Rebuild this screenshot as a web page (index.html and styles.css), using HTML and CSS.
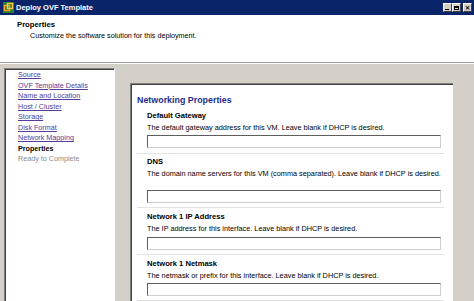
FILE: index.html
```html
<!DOCTYPE html>
<html>
<head>
<meta charset="utf-8">
<link rel="stylesheet" href="styles.css">
</head>
<body>
<div class="window">
  <div class="titlebar">
    <svg class="title-icon" width="11" height="11" viewBox="0 0 11 11">
      <rect x="0" y="0" width="11" height="11" fill="#2f7d32"/>
      <rect x="1.5" y="3.5" width="5" height="5" fill="none" stroke="#f2a51a" stroke-width="1.4"/>
      <rect x="4.5" y="1.5" width="5" height="5" fill="none" stroke="#f6c84a" stroke-width="1.4"/>
    </svg>
    <span class="title-text">Deploy OVF Template</span>
    <div class="winbtns">
      <span class="wbtn"><span class="g-min"></span></span>
      <span class="wbtn"><span class="g-max"></span></span>
      <span class="wbtn close">&#x2715;</span>
    </div>
  </div>
  <div class="header">
    <div class="header-title">Properties</div>
    <div class="header-desc">Customize the software solution for this deployment.</div>
  </div>
  <div class="main">
    <nav class="nav">
      <a class="nav-link" href="#">Source</a>
      <a class="nav-link" href="#">OVF Template Details</a>
      <a class="nav-link" href="#">Name and Location</a>
      <a class="nav-link" href="#">Host / Cluster</a>
      <a class="nav-link" href="#">Storage</a>
      <a class="nav-link" href="#">Disk Format</a>
      <a class="nav-link" href="#">Network Mapping</a>
      <span class="nav-current">Properties</span>
      <span class="nav-disabled">Ready to Complete</span>
    </nav>
    <div class="content">
      <div class="panel">
        <div class="panel-title">Networking Properties</div>
        <div class="section s-first">
          <div class="field-title">Default Gateway</div>
          <div class="field-desc">The default gateway address for this VM. Leave blank if DHCP is desired.</div>
          <input class="field-input" type="text">
        </div>
        <div class="section s-dns">
          <div class="field-title">DNS</div>
          <div class="field-desc">The domain name servers for this VM (comma separated). Leave blank if DHCP is desired.</div>
          <input class="field-input gap-lg" type="text">
        </div>
        <div class="section s-ip">
          <div class="field-title">Network 1 IP Address</div>
          <div class="field-desc">The IP address for this interface. Leave blank if DHCP is desired.</div>
          <input class="field-input gap-md" type="text">
        </div>
        <div class="section s-mask">
          <div class="field-title">Network 1 Netmask</div>
          <div class="field-desc">The netmask or prefix for this interface. Leave blank if DHCP is desired.</div>
          <input class="field-input" type="text">
        </div>
      </div>
    </div>
  </div>
</div>
</body>
</html>
```
FILE: styles.css
```css
html, body {
  margin: 0;
  padding: 0;
}
body {
  width: 474px;
  height: 301px;
  overflow: hidden;
  background: #d4d0c8;
  font-family: "Liberation Sans", Arial, sans-serif;
  color: #000;
}
.window {
  display: flex;
  flex-direction: column;
  height: 301px;
}
.titlebar {
  height: 15px;
  flex: none;
  background: #0a246a;
  display: flex;
  align-items: center;
  padding: 0 2px 0 3px;
  color: #fff;
  font-weight: bold;
  font-size: 7.5px;
}
.title-icon {
  margin-right: 2px;
  flex: none;
}
.title-text {
  flex: 1;
}
.winbtns {
  display: flex;
  align-items: center;
}
.wbtn {
  width: 9px;
  height: 9px;
  box-sizing: border-box;
  background: #d4d0c8;
  border: 1px solid;
  border-color: #fff #404040 #404040 #fff;
  display: flex;
  align-items: center;
  justify-content: center;
  color: #000;
  font-size: 6px;
  line-height: 1;
}
.wbtn.close {
  margin-left: 2px;
  font-weight: bold;
}
.g-min {
  width: 4px;
  height: 1px;
  background: #000;
  margin-top: 4px;
  margin-left: -1px;
}
.g-max {
  width: 5px;
  height: 4px;
  box-sizing: border-box;
  border: 1px solid #000;
  border-top-width: 2px;
}
.header {
  height: 48px;
  flex: none;
  box-sizing: border-box;
  background: #fff;
  padding: 4px 0 0 17px;
  border-bottom: 1px solid #9a9a9a;
  box-shadow: 0 1px 0 #fff;
  margin-bottom: 1px;
}
.header-title {
  font-weight: bold;
  font-size: 7.7px;
  line-height: 11px;
}
.header-desc {
  font-size: 7.2px;
  line-height: 11px;
  padding-left: 13px;
}
.main {
  flex: 1;
  display: flex;
  padding: 4px 0 0 4px;
  min-height: 0;
}
.nav {
  width: 111px;
  flex: none;
  box-sizing: border-box;
  background: #fff;
  border-top: 1px solid #808080;
  border-left: 1px solid #808080;
  border-right: 1px solid #fff;
  box-shadow: inset 1px 1px 0 #404040;
  padding: 1px 0 0 13px;
  display: flex;
  flex-direction: column;
  align-items: flex-start;
  font-size: 7.2px;
  line-height: 10.5px;
}
.nav-link {
  color: #553c96;
  text-decoration: underline;
}
.nav-current {
  font-weight: bold;
  color: #000;
}
.nav-disabled {
  color: #8a8a8a;
}
.content {
  flex: 1;
  display: flex;
  padding: 15px 21px 0 15px;
  min-width: 0;
}
.panel {
  flex: 1;
  background: #fff;
  border-top: 1px solid #808080;
  border-left: 1px solid #808080;
  box-shadow: inset 1px 1px 0 #404040;
  padding: 9px 9px 0 6px;
}
.panel-title {
  font-weight: bold;
  color: #1f2e8a;
  font-size: 8.9px;
  line-height: 14px;
  margin-bottom: 2px;
}
.section {
  padding: 2px 3px 4px 10px;
  border-bottom: 1px solid #e2e2e2;
}
.s-first {
  padding-top: 0;
  padding-bottom: 5px;
}
.s-dns {
  padding-top: 1px;
}
.field-title {
  font-weight: bold;
  font-size: 7.6px;
  line-height: 13px;
}
.field-desc {
  font-size: 7.3px;
  line-height: 12px;
  white-space: nowrap;
}
.field-input {
  display: block;
  width: 100%;
  height: 13px;
  box-sizing: border-box;
  margin: 1px 0 0 0;
  padding: 0;
  background: #fff;
  border: 1px solid;
  border-color: #5e5e5e #cfcfcf #cfcfcf #5e5e5e;
  outline: none;
}
.field-input.gap-lg {
  margin-top: 10px;
}
.field-input.gap-md {
  margin-top: 2px;
}
```
